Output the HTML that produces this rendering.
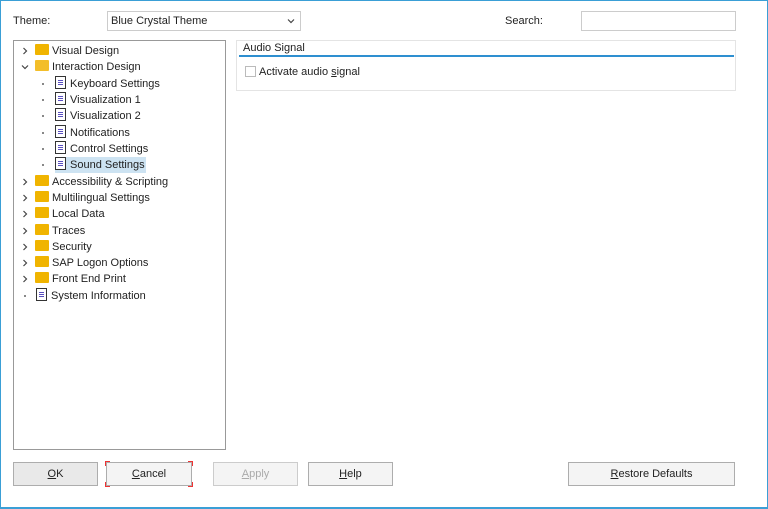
<!DOCTYPE html>
<html><head><style>
*{box-sizing:border-box;margin:0;padding:0}
body{width:768px;height:509px;background:#fff;font-family:"Liberation Sans",sans-serif;font-size:11px;color:#222;position:relative;overflow:hidden}
.frame{position:absolute;left:0;top:0;width:768px;height:509px;border:1px solid #3a9fd6;border-bottom:2px solid #3a9fd6}
.a{position:absolute}
.btn{position:absolute;top:462px;height:24px;border:1px solid #adadad;background:#e9e9e9;text-align:center;line-height:22px;font-size:11px}
.row{position:absolute;left:0;height:16px;line-height:16px;white-space:nowrap}
.fold{display:inline-block;width:14px;height:11px;background:#f0b400;vertical-align:-1px;border-radius:1px;margin-right:3px}
.doc{display:inline-block;width:11px;height:13px;vertical-align:-2px;margin-right:4px}
.dot{position:absolute;width:2px;height:2px;background:#888}
.chev{position:absolute;top:4px;width:8px;height:8px}
.cr{position:absolute;width:5px;height:5px;border-color:#e33;border-style:solid;border-width:0}
</style></head><body>
<svg width="0" height="0" style="position:absolute"><defs>
<symbol id="d" viewBox="0 0 11 13"><rect x="0.5" y="0.5" width="10" height="12" fill="#fff" stroke="#333"/><path d="M3 4.5h5M3 6.5h5M3 8.5h5" stroke="#5a4fc0"/></symbol>
<symbol id="r" viewBox="0 0 8 8"><path d="M2.5 1l3 3-3 3" fill="none" stroke="#444" stroke-width="1.2"/></symbol>
<symbol id="dn" viewBox="0 0 8 8"><path d="M1 2.5l3 3 3-3" fill="none" stroke="#444" stroke-width="1.2"/></symbol>
</defs></svg>
<div class="frame"></div>
<div class="a" style="left:13px;top:15px">Theme:</div>
<div class="a" style="left:107px;top:11px;width:194px;height:20px;border:1px solid #ccc;padding-left:3px;line-height:18px">Blue Crystal Theme<svg style="position:absolute;right:5px;top:5px" width="8" height="8"><use href="#dn"/></svg></div>
<div class="a" style="left:505px;top:15px">Search:</div>
<div class="a" style="left:581px;top:11px;width:155px;height:20px;border:1px solid #ccc"></div>

<div class="a" style="left:13px;top:40px;width:213px;height:410px;border:1px solid #999">
<div style="position:relative;top:2px;font-size:11px">
<div class="row" style="top:0"><svg class="chev" style="left:7px"><use href="#r"/></svg><span style="position:absolute;left:21px"><span class="fold"></span>Visual Design</span></div>
<div class="row" style="top:16px"><svg class="chev" style="left:7px"><use href="#dn"/></svg><span style="position:absolute;left:21px"><span class="fold" style="background:#f3be2a"></span>Interaction Design</span></div>
<div class="row" style="top:33px"><span class="dot" style="left:28px;top:7px"></span><span style="position:absolute;left:41px"><svg class="doc"><use href="#d"/></svg>Keyboard Settings</span></div>
<div class="row" style="top:49px"><span class="dot" style="left:28px;top:7px"></span><span style="position:absolute;left:41px"><svg class="doc"><use href="#d"/></svg>Visualization 1</span></div>
<div class="row" style="top:65px"><span class="dot" style="left:28px;top:7px"></span><span style="position:absolute;left:41px"><svg class="doc"><use href="#d"/></svg>Visualization 2</span></div>
<div class="row" style="top:82px"><span class="dot" style="left:28px;top:7px"></span><span style="position:absolute;left:41px"><svg class="doc"><use href="#d"/></svg>Notifications</span></div>
<div class="row" style="top:98px"><span class="dot" style="left:28px;top:7px"></span><span style="position:absolute;left:41px"><svg class="doc"><use href="#d"/></svg>Control Settings</span></div>
<div class="row" style="top:114px"><span class="dot" style="left:28px;top:7px"></span><span style="position:absolute;left:41px;background:#cde3f2;padding-right:1px"><svg class="doc"><use href="#d"/></svg>Sound Settings</span></div>
<div class="row" style="top:131px"><svg class="chev" style="left:7px"><use href="#r"/></svg><span style="position:absolute;left:21px"><span class="fold"></span>Accessibility &amp; Scripting</span></div>
<div class="row" style="top:147px"><svg class="chev" style="left:7px"><use href="#r"/></svg><span style="position:absolute;left:21px"><span class="fold"></span>Multilingual Settings</span></div>
<div class="row" style="top:163px"><svg class="chev" style="left:7px"><use href="#r"/></svg><span style="position:absolute;left:21px"><span class="fold"></span>Local Data</span></div>
<div class="row" style="top:180px"><svg class="chev" style="left:7px"><use href="#r"/></svg><span style="position:absolute;left:21px"><span class="fold"></span>Traces</span></div>
<div class="row" style="top:196px"><svg class="chev" style="left:7px"><use href="#r"/></svg><span style="position:absolute;left:21px"><span class="fold"></span>Security</span></div>
<div class="row" style="top:212px"><svg class="chev" style="left:7px"><use href="#r"/></svg><span style="position:absolute;left:21px"><span class="fold"></span>SAP Logon Options</span></div>
<div class="row" style="top:228px"><svg class="chev" style="left:7px"><use href="#r"/></svg><span style="position:absolute;left:21px"><span class="fold"></span>Front End Print</span></div>
<div class="row" style="top:245px"><span class="dot" style="left:10px;top:7px"></span><span style="position:absolute;left:22px"><svg class="doc"><use href="#d"/></svg>System Information</span></div>
</div></div>

<div class="a" style="left:236px;top:40px;width:500px;height:51px;border:1px solid #e4e4e4">
<div class="a" style="left:6px;top:1px">Audio Signal</div>
<div class="a" style="left:2px;top:14px;width:495px;height:2px;background:#2e8fd0"></div>
<div class="a" style="left:8px;top:25px;width:11px;height:11px;border:1px solid #bbb"></div>
<div class="a" style="left:22px;top:25px">Activate audio <u>s</u>ignal</div>
</div>

<div class="btn" style="left:13px;width:85px"><u>O</u>K</div>
<div class="btn" style="left:106px;width:86px;background:#f4f4f4"><u>C</u>ancel</div>
<div class="cr" style="left:105px;top:461px;border-top-width:1px;border-left-width:1px"></div>
<div class="cr" style="left:188px;top:461px;border-top-width:1px;border-right-width:1px"></div>
<div class="cr" style="left:105px;top:482px;border-bottom-width:1px;border-left-width:1px"></div>
<div class="cr" style="left:188px;top:482px;border-bottom-width:1px;border-right-width:1px"></div>
<div class="btn" style="left:213px;width:85px;background:#f4f4f4;border-color:#ccc;color:#aaa"><u>A</u>pply</div>
<div class="btn" style="left:308px;width:85px;background:#f4f4f4"><u>H</u>elp</div>
<div class="btn" style="left:568px;width:167px;background:#f4f4f4"><u>R</u>estore Defaults</div>
</body></html>
